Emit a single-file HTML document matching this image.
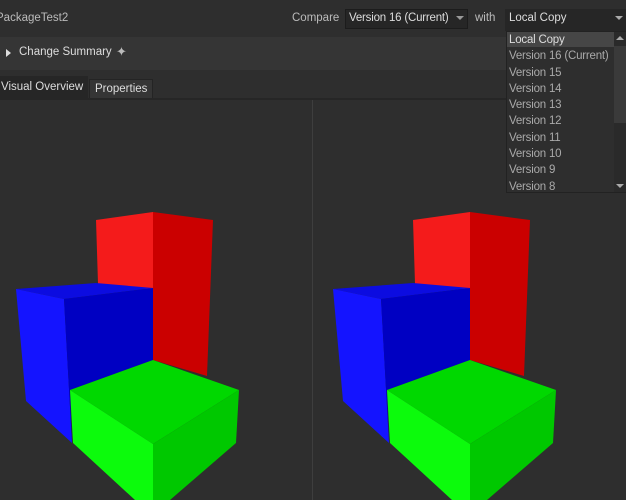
<!DOCTYPE html>
<html><head><style>
body{margin:0;width:626px;height:500px;overflow:hidden;background:#2e2e2e;font-family:"Liberation Sans",sans-serif;font-size:11px;color:#ccc;position:relative}
.a{position:absolute}
</style></head><body>
<div class="a" style="left:0;top:0;width:626px;height:37px;background:#2e2e2e"></div>
<div class="a" style="left:-4px;top:12px;color:#bbb;font-size:11.5px">PackageTest2</div>
<div class="a" style="left:292px;top:12px;color:#bbb;font-size:11.5px">Compare</div>
<div class="a" style="left:345px;top:9px;width:123px;height:20px;background:#262626;border:1px solid #1c1c1c;box-sizing:border-box"></div>
<div class="a" style="left:349px;top:12px;color:#ddd;font-size:11.5px;letter-spacing:-0.2px">Version 16 (Current)</div>
<div class="a" style="left:456px;top:16px;border:4px solid transparent;border-top:4px solid #999;border-bottom:0"></div>
<div class="a" style="left:475px;top:12px;color:#bbb;font-size:11.5px">with</div>
<div class="a" style="left:505px;top:9px;width:121px;height:22px;background:#262626"></div>
<div class="a" style="left:509px;top:12px;color:#ddd;font-size:11.5px">Local Copy</div>
<div class="a" style="left:615px;top:16px;border:4px solid transparent;border-top:4px solid #aaa;border-bottom:0"></div>
<div class="a" style="left:0;top:37px;width:626px;height:33px;background:#353535"></div>
<div class="a" style="left:6px;top:49px;border:4px solid transparent;border-left:5px solid #ddd;border-right:0"></div>
<div class="a" style="left:19px;top:46px;color:#ddd;font-size:11.5px">Change Summary</div>
<div class="a" style="left:116px;top:44px;color:#bbb;font-size:13px">✦</div>
<div class="a" style="left:0;top:70px;width:626px;height:28px;background:#2e2e2e"></div>
<div class="a" style="left:0;top:76px;width:88px;height:23px;background:#262626"></div>
<div class="a" style="left:1px;top:81px;color:#ddd;font-size:11.5px">Visual Overview</div>
<div class="a" style="left:89px;top:79px;width:64px;height:20px;background:#353535;border:1px solid #242424;border-bottom:0;box-sizing:border-box"></div>
<div class="a" style="left:95px;top:83px;color:#ddd;font-size:11.5px">Properties</div>
<div class="a" style="left:0;top:98px;width:626px;height:2px;background:#262626"></div>
<div class="a" style="left:312px;top:100px;width:1px;height:400px;background:#3e3e3e"></div>
<svg class="a" style="left:0;top:0" width="626" height="500">
<defs><g id="c">
<polygon points="96,220 153,212 153,290 98,284" fill="#f41b1b"/>
<polygon points="153,212 213,220 207,376 153,360" fill="#cb0000"/>
<polygon points="16,289 96,283 153,288 64,299" fill="#0c0ce0"/>
<polygon points="16,289 64,299 72,443 26,401" fill="#1414ff"/>
<polygon points="64,299 153,288 153,360 70,390 72,443" fill="#0000c2"/>
<polygon points="70,390 153,360 239,390 153,444" fill="#00d800"/>
<polygon points="70,390 153,444 153,500 135,500 73,443" fill="#0cfb0c"/>
<polygon points="153,444 239,390 236,443 170,500 153,500" fill="#00c800"/>
</g></defs>
<use href="#c"/><use href="#c" x="317"/>
</svg>
<div class="a" style="left:506px;top:31px;width:120px;height:162px;background:#2e2e2e;border:1px solid #222;box-sizing:border-box"></div>
<div class="a" style="left:507px;top:32px;width:107px;height:15px;background:#464646"></div>
<div class="a" style="left:614px;top:32px;width:12px;height:160px;background:#2a2a2a"></div>
<div class="a" style="left:614px;top:46px;width:12px;height:77px;background:#3a3a3a"></div>
<div class="a" style="left:616px;top:36px;border:4px solid transparent;border-bottom:4px solid #aaa;border-top:0"></div>
<div class="a" style="left:616px;top:184px;border:4px solid transparent;border-top:4px solid #aaa;border-bottom:0"></div>
<div class="a" style="left:509px;top:32px;line-height:16.3px;color:#aaa;font-size:11.5px;letter-spacing:-0.2px">
<div style="color:#ddd">Local Copy</div><div>Version 16 (Current)</div><div>Version 15</div><div>Version 14</div><div>Version 13</div><div>Version 12</div><div>Version 11</div><div>Version 10</div><div>Version 9</div><div>Version 8</div></div>
</body></html>
